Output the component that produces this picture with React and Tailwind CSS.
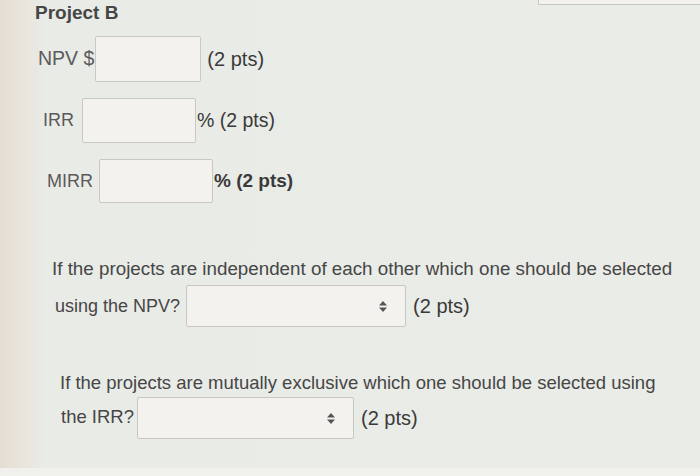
import React from "react";

function Box({ w, h, className = "" }) {
  return (
    <div
      className={`shrink-0 rounded-[2px] border border-[#c9c9c4] bg-[#f3f2ed] ${className}`}
      style={{ width: w, height: h }}
    />
  );
}

function Select({ w, h }) {
  return (
    <div
      className="flex shrink-0 items-center justify-end rounded-[2px] border border-[#c6c7c2] bg-[#f3f2ee] pr-[18px]"
      style={{ width: w, height: h }}
    >
      <svg width="8" height="11" viewBox="0 0 8 11">
        <path d="M4 0 L8 4.5 L0 4.5 Z" fill="#555" />
        <path d="M0 6.5 L8 6.5 L4 11 Z" fill="#555" />
      </svg>
    </div>
  );
}

export default function App() {
  return (
    <div
      className="relative flex h-[476px] w-[700px] flex-col overflow-hidden bg-[linear-gradient(to_right,#e5ddd1_0px,#e8e5dd_22px,#e9ebe6_45px,#eaece7_700px)] text-[#555]"
      style={{ fontFamily: '"Liberation Sans", Arial, sans-serif' }}
    >
      {/* header */}
      <div className="flex items-start justify-between">
        <div className="pl-[35px] pt-[1px] text-[19px] font-bold leading-[24px] text-[#464646]">
          Project B
        </div>
        <div className="h-[5px] w-[162px] border-b border-l border-[#c8c8c2] bg-[#f3f2ee]" />
      </div>

      {/* NPV */}
      <div className="mt-[11px] flex items-center pl-[38px] text-[18px]">
        <span className="text-[19.5px] text-[#5a5a5a]">NPV $</span>
        <Box w={106} h={46} className="ml-[1px]" />
        <span className="ml-[6px] text-[20px] text-[#3a3a3a]">(2 pts)</span>
      </div>

      {/* IRR */}
      <div className="mt-[16px] flex items-center pl-[43px] text-[18px]">
        <span className="text-[#5a5a5a]">IRR</span>
        <Box w={114} h={45} className="ml-[8px]" />
        <span className="ml-[1px] text-[19.5px] text-[#3a3a3a]">% (2 pts)</span>
      </div>

      {/* MIRR */}
      <div className="mt-[16px] flex items-center pl-[47px] text-[18px]">
        <span className="text-[#5a5a5a]">MIRR</span>
        <Box w={114} h={44} className="ml-[6px]" />
        <span className="ml-[1px] text-[19px] font-bold text-[#3a3a3a]">% (2 pts)</span>
      </div>

      {/* Question 1 */}
      <div className="mt-[50px] pl-[52px] text-[18.8px] leading-[32px] text-[#464646]">
        If the projects are independent of each other which one should be selected
      </div>
      <div className="flex items-center pl-[55px] text-[18px] text-[#464646]">
        <span>using the NPV?</span>
        <div className="ml-[6px]">
          <Select w={220} h={42} />
        </div>
        <span className="ml-[7px] text-[20px] text-[#3a3a3a]">(2 pts)</span>
      </div>

      {/* Question 2 */}
      <div className="mt-[40px] pl-[60px] text-[18.5px] leading-[32px] text-[#464646]">
        If the projects are mutually exclusive which one should be selected using
      </div>
      <div className="mt-[-2px] flex items-center pl-[61px] text-[18.5px] text-[#464646]">
        <span className="mt-[-3px]">the IRR?</span>
        <div className="ml-[3px]">
          <Select w={217} h={42} />
        </div>
        <span className="ml-[7px] text-[20px] text-[#3a3a3a]">(2 pts)</span>
      </div>

      <div className="mt-auto h-[8px] bg-[#f0f1ed]" />
    </div>
  );
}
